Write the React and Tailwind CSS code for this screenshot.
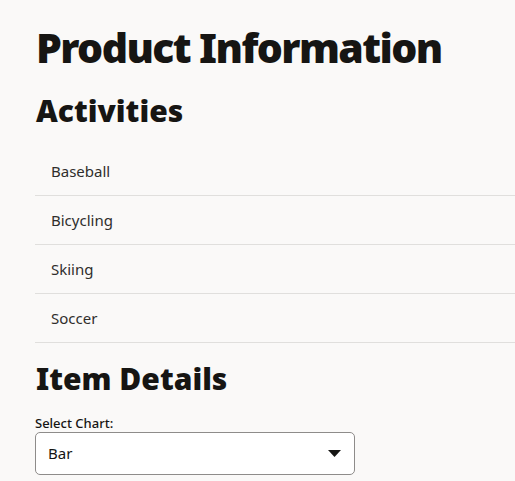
export default function App() {
  const items = ["Baseball", "Bicycling", "Skiing", "Soccer"];
  return (
    <div className="min-h-[481px] w-full overflow-hidden bg-[#faf9f8] pl-[35px] text-[#161513]" style={{ fontFamily: '"Noto Sans", sans-serif' }}>
      <h1 className="pt-[23px] text-[41px] leading-[1.2] font-black pl-px tracking-[-1.6px]">
        Product Information
      </h1>
      <h2 className="mt-[21px] text-[30px] leading-[1.2] font-black pl-px">
        Activities
      </h2>
      <ul className="mt-[18px] w-[600px]">
        {items.map((it) => (
          <li key={it} className="flex h-[49px] items-center border-b border-[#e0dfdd] pl-[16px] text-[15px] text-[#2f2e2c]">
            {it}
          </li>
        ))}
      </ul>
      <h2 className="mt-[18px] text-[30px] leading-[1.2] font-black pl-px">
        Item Details
      </h2>
      <div className="mt-[18px] text-[13px] leading-[16px] font-medium text-[#161513]">Select Chart:</div>
      <div className="mt-[1px] flex h-[43px] w-[320px] items-center justify-between rounded-[5px] border border-[#8e8c8a] bg-white pl-[12px] pr-[13px] text-[15px]">
        <span>Bar</span>
        <svg width="13" height="7" viewBox="0 0 13 7"><path d="M0 0H13L6.5 7Z" fill="#161513" /></svg>
      </div>
    </div>
  );
}
